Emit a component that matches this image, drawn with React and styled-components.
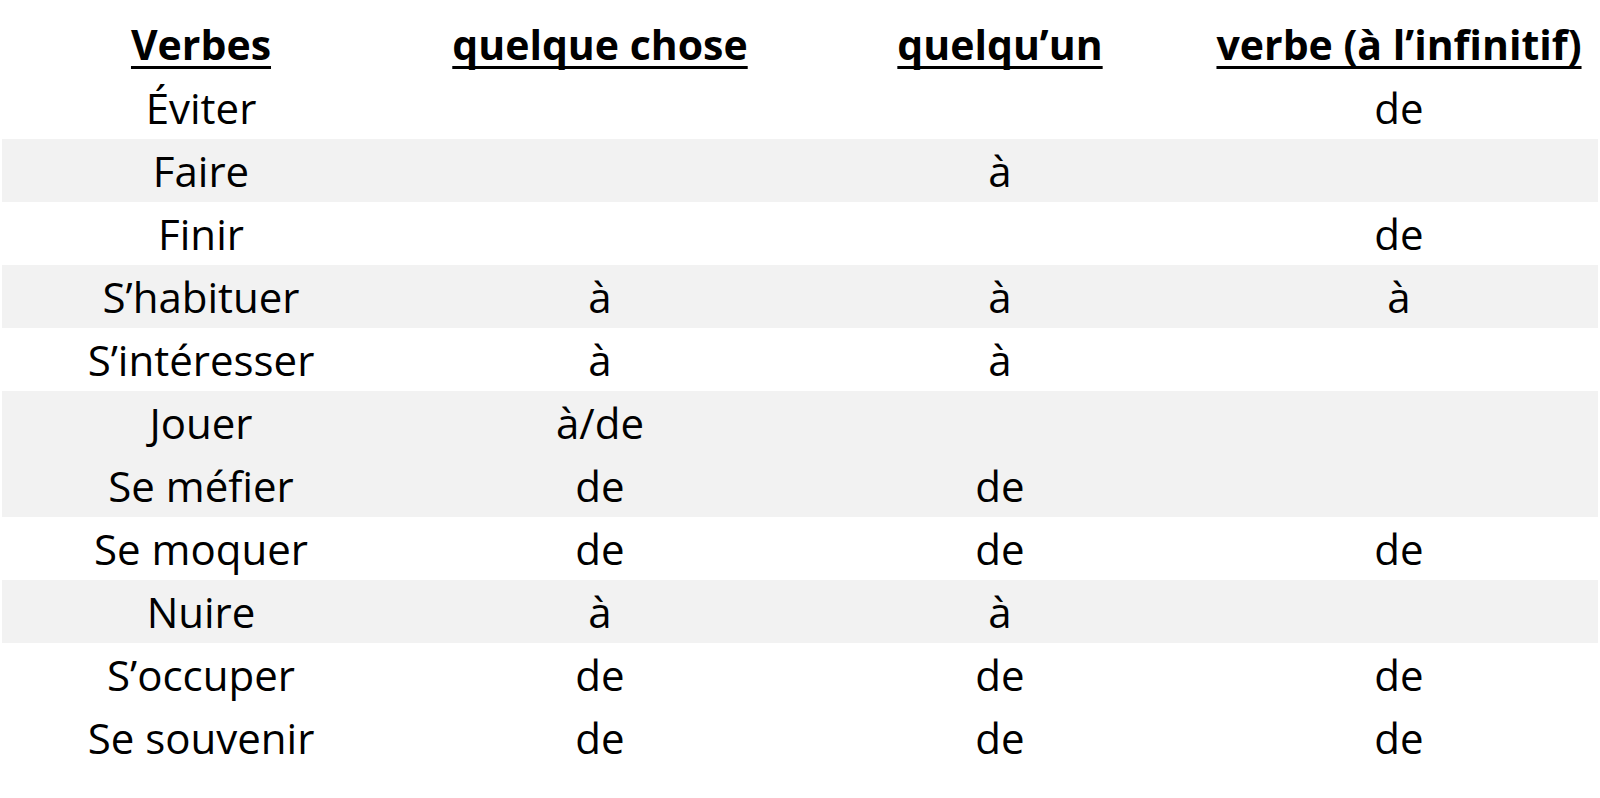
import styled, { createGlobalStyle } from "styled-components";

const GlobalStyle = createGlobalStyle`
  body {
    margin: 0;
    background: #ffffff;
  }
`;

const rows = [
  { verb: "Éviter", thing: "", person: "", inf: "de" },
  { verb: "Faire", thing: "", person: "à", inf: "", shaded: true },
  { verb: "Finir", thing: "", person: "", inf: "de" },
  { verb: "S’habituer", thing: "à", person: "à", inf: "à", shaded: true },
  { verb: "S’intéresser", thing: "à", person: "à", inf: "" },
  { verb: "Jouer", thing: "à/de", person: "", inf: "", shaded: true },
  { verb: "Se méfier", thing: "de", person: "de", inf: "", shaded: true },
  { verb: "Se moquer", thing: "de", person: "de", inf: "de" },
  { verb: "Nuire", thing: "à", person: "à", inf: "", shaded: true },
  { verb: "S’occuper", thing: "de", person: "de", inf: "de" },
  { verb: "Se souvenir", thing: "de", person: "de", inf: "de" },
];

const App = () => {
  return (
    <>
      <GlobalStyle />
      <Table>
        <HeaderRow>
          <HeadCell>Verbes</HeadCell>
          <HeadCell>quelque chose</HeadCell>
          <HeadCell>quelqu’un</HeadCell>
          <HeadCell>verbe (à l’infinitif)</HeadCell>
        </HeaderRow>
        {rows.map((r) => (
          <Row key={r.verb} shaded={r.shaded}>
            <Cell>{r.verb}</Cell>
            <Cell>{r.thing}</Cell>
            <Cell>{r.person}</Cell>
            <Cell>{r.inf}</Cell>
          </Row>
        ))}
      </Table>
    </>
  );
};

const Table = styled.div`
  display: flex;
  flex-direction: column;
  width: 1596px;
  margin-left: 2px;
  font-family: "Open Sans", "Liberation Sans", sans-serif;
  font-size: 42px;
  color: #000000;
`;

const Row = styled.div.withConfig({ shouldForwardProp: (p) => p !== "shaded" })`
  display: grid;
  grid-template-columns: 398px 400px 400px 398px;
  height: 63px;
  line-height: 63px;
  background: ${(p) => (p.shaded ? "#f2f2f2" : "transparent")};
`;

const HeaderRow = styled(Row)`
  height: 76px;
  box-sizing: border-box;
  padding-top: 13px;
`;

const Cell = styled.div`
  text-align: center;
  white-space: nowrap;
`;

const HeadCell = styled.div`
  text-align: center;
  white-space: nowrap;
  font-weight: 700;
  font-size: 41px;
  text-decoration: underline;
  text-decoration-thickness: 3px;
  text-underline-offset: 6px;
  text-decoration-skip-ink: none;
`;

export default App;
